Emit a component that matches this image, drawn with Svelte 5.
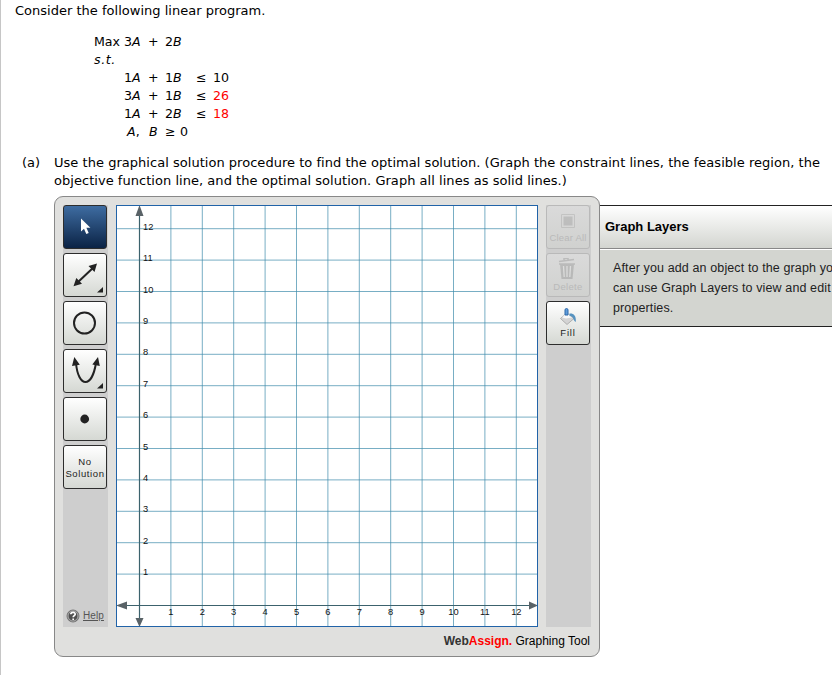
<script>
  const units = Array.from({ length: 12 }, (_, i) => i + 1);
  const step = 31.4;
  const rows = [
    ['1', 'A', '1', 'B', '10', false],
    ['3', 'A', '1', 'B', '26', true],
    ['1', 'A', '2', 'B', '18', true]
  ];
  const tools = ['pointer', 'line', 'circle', 'parabola', 'point', 'none'];
</script>

<main>
  <p class="intro"><span>Consider the following linear program.</span></p>

  <div class="program">
    <div class="row"><span>Max</span><span>3<i>A</i></span><span>+</span><span>2<i>B</i></span></div>
    <div class="row"><i class="st">s.t.</i></div>
    {#each rows as [a, x, b, y, limit, varied]}
      <div class="row">
        <span></span><span>{a}<i>{x}</i></span><span>+</span><span>{b}<i>{y}</i></span><span>≤</span><span class:varied>{limit}</span>
      </div>
    {/each}
    <div class="row signs"><span></span><span><i>A</i>,</span><i>B</i><span>≥</span><span>0</span></div>
  </div>

  <div class="question">
    <span class="label">(a)</span>
    <div>
      <div class="l1">Use the graphical solution procedure to find the optimal solution. (Graph the constraint lines, the feasible region, the</div>
      <div class="l2">objective function line, and the optimal solution. Graph all lines as solid lines.)</div>
    </div>
  </div>

  <div class="workspace">
    <section class="grapher">
      <div class="body">
        <div class="column">
          {#each tools as tool}
            <button class="tool" class:active={tool === 'pointer'} aria-label={tool}>
              {#if tool === 'none'}
                <span class="words">No<br />Solution</span>
              {:else}
                <svg width="42" height="42" viewBox="0 0 42 42">
                  {#if tool === 'pointer'}
                    <path d="M17 12.5v13l3-2.7 2.3 5.3 2.4-1.1-2.3-5.2h4z" fill="#fff" />
                  {:else if tool === 'line'}
                    <path d="M13 29 30 13" stroke="#222" stroke-width="2" />
                    <path d="M9.5 32.3 12.3 24 18 29.800z M33 9.500 30.500 18 24.500 12z" fill="#222" />
                  {:else if tool === 'circle'}
                    <circle cx="20.500" cy="21" r="10.500" fill="none" stroke="#222" stroke-width="2" />
                  {:else if tool === 'parabola'}
                    <path d="M12 13C13 25 17 32 21.500 32S30 25 32 13" fill="none" stroke="#222" stroke-width="2" />
                    <path d="M10.300 7 8 16 15.800 14.800z M34 7 28.300 14.500 35.800 16z" fill="#222" />
                  {:else}
                    <circle cx="20.700" cy="21" r="4.400" fill="#222" />
                  {/if}
                  {#if tool === 'line' || tool === 'parabola'}
                    <path d="M39 33v5.500h-6z" fill="#222" />
                  {/if}
                </svg>
              {/if}
            </button>
          {/each}
          <div class="help">
            <svg width="14" height="14" viewBox="0 0 14 14">
              <circle cx="7" cy="7" r="6" fill="#505050" stroke="#777" />
              <circle cx="7" cy="7" r="5" fill="none" stroke="#ddd" stroke-width=".7" />
              <path d="M4.800 5.300C5 2.700 9.300 2.800 9.200 5.200 9.200 6.700 7.200 6.600 7.200 8.300M7.200 9.500V11" fill="none" stroke="#fff" stroke-width="1.700" />
            </svg>
            <a href="#help">Help</a>
          </div>
        </div>

        <svg class="graph" width="422" height="422" viewBox="0 0 422 422">
          <rect x=".5" y=".5" width="421" height="421" fill="#fff" />
          {#each units as n}
            <path
              d="M{23.5 + n * step} 1V421M1 {400.5 - n * step}H421"
              stroke="#3f8cab"
              stroke-opacity=".7"
            />
          {/each}
          <path d="M23.500 5V417M5 400.500H417" stroke="#3c626d" stroke-width="1.200" />
          <path d="M23.500 0 19.500 11h8zM23.500 422l-4-9h8zM0 400.500l11-4v8zM422 400.500l-9-4v8z" fill="#596267" />
          {#each units as n}
            <text x={23.5 + n * step} y="409.500" text-anchor="middle">{n}</text>
            <text x="27" y={401.500 - n * step}>{n}</text>
          {/each}
          <rect x=".5" y=".5" width="421" height="421" fill="none" stroke="#2163a8" />
        </svg>

        <div class="column">
          <button class="tool action off">
            <svg width="16" height="16" viewBox="0 0 16 16">
              <path d="M1.500 1.500h13v13h-13z" fill="none" stroke="#888" />
              <path d="M3.500 3.500h9v9h-9z" fill="#777" />
            </svg>
            <span class="clear">Clear All</span>
          </button>
          <button class="tool action off trash">
            <svg width="18" height="22" viewBox="0 0 18 22">
              <path d="M1 3.500 16 1.500M6 2V.5h4V2M1 6h16" fill="none" stroke="#666" stroke-width="1.500" />
              <path d="M2 6h14l-1.500 15h-11z" fill="#666" />
              <path d="M5.500 8l.7 11M9 8v11M12.500 8l-.7 11" stroke="#eee" stroke-width="1.300" />
            </svg>
            <span>Delete</span>
          </button>
          <button class="tool action fill">
            <svg width="18" height="18" viewBox="0 0 18 18">
              <path d="M8 5 1.500 10.500 8 16.500l7-6z" fill="#d4d4d4" stroke="#999" stroke-width=".7" />
              <path d="M8 5 3 9.500l4 1 6-1z" fill="#f7f7f7" />
              <path d="M6 2q0-1.500 1.500-1.500T9 2v5H6z" fill="#5f9cda" stroke="#2c68aa" />
              <path d="M10.500 5.500C14 5 17.500 7 16.800 14 13.500 12 15 8 10.500 8z" fill="#5793c0" />
            </svg>
            <span>Fill</span>
          </button>
        </div>
      </div>
      <footer><span><b>Web<em>Assign.</em></b> Graphing Tool</span></footer>
    </section>

    <aside>
      <h2>Graph Layers</h2>
      <p>After you add an object to the graph you<br />can use Graph Layers to view and edit<br />properties.</p>
    </aside>
  </div>
</main>

<style>
  :global(body) { margin: 0; background: #fff; }
  main {
    box-sizing: border-box;
    width: 832px;
    height: 675px;
    overflow: hidden;
    border-left: 1px solid #c6c6c6;
    padding-top: 2px;
    font: 13px/18px Verdana, "DejaVu Sans", sans-serif;
    color: #000;
  }
  .intro { margin: 0 0 13px 14px; letter-spacing: .01px; }
  .program { margin-left: 93px; }
  .row { display: grid; grid-template-columns: 30px 24px 17px 31px 17px auto; height: 18px; white-space: nowrap; font-size: 12.6px; }
  .st { letter-spacing: .6px; }
  .signs { grid-template-columns: 33px 22px 16px 15px auto; }
  .varied { color: red; }
  .question { display: flex; margin: 13px 0 0 21px; white-space: nowrap; }
  .label { width: 32px; }
  .l1 { letter-spacing: .03px; }
  .l2 { letter-spacing: .036px; }
  .workspace { display: flex; margin: 6px 0 0 53px; }
  .grapher {
    box-sizing: border-box;
    width: 546px;
    height: 461px;
    flex: none;
    padding: 8px;
    border: 1px solid #888;
    border-radius: 9px;
    background: #e0e0de;
  }
  .body { display: flex; justify-content: space-between; height: 422px; width: 528px; }
  .column { display: flex; flex-direction: column; gap: 4px; width: 45px; background: #cecece; }
  .tool {
    box-sizing: border-box;
    width: 44px;
    height: 44px;
    flex: none;
    padding: 0;
    border: 1px solid #2d2d2d;
    border-radius: 3px;
    background: linear-gradient(#fff, #d5d8d3);
    color: #222;
    font: 9.5px/12px "Liberation Sans", Arial, sans-serif;
    white-space: nowrap;
  }
  .tool > svg { display: block; }
  .active { background: linear-gradient(#3e6ca1, #0b2345); }
  .words { display: block; padding-top: 1px; letter-spacing: .6px; }
  .action { display: flex; flex-direction: column; align-items: center; justify-content: flex-end; padding-bottom: 5px; letter-spacing: .8px; }
  .off { border-color: #b9b9b9; background: linear-gradient(#dadada, #d0d1cf); color: #b9b9b9; }
  .off svg { opacity: .25; }
  .action.off { padding-bottom: 4px; }
  .action.off svg { margin-bottom: 3px; }
  .action.trash { padding-bottom: 3px; letter-spacing: .3px; }
  .action.trash svg { margin-bottom: 1px; margin-right: 2px; }
  .fill svg { margin-bottom: 1px; }
  .clear { letter-spacing: .2px; }
  .help { display: flex; align-items: center; gap: 3px; margin: auto 0 3px 3px; height: 16px; font: 10px/14px "Liberation Sans", Arial, sans-serif; }
  .help a { color: #555; letter-spacing: .1px; }
  .graph { display: block; }
  .graph text { font: 9.3px "Liberation Sans", Arial, sans-serif; fill: #111; }
  footer { padding: 5px 1px 0 0; text-align: right; font: 12px/18px "Liberation Sans", Arial, sans-serif; }
  footer b { color: #333; }
  footer em { color: #f00; font-style: normal; }
  aside {
    box-sizing: border-box;
    width: 232px;
    flex: none;
    height: 122px;
    margin-top: 9px;
    border-top: 1px solid #222;
    border-bottom: 1px solid #222;
    background: #d3d5d0;
    font-family: "Liberation Sans", Arial, sans-serif;
    white-space: nowrap;
    overflow: hidden;
  }
  h2 { margin: 0; height: 42px; padding-left: 5px; border-bottom: 1px solid #888; background: linear-gradient(#fff, #d3d5d0); box-shadow: 0 1px #fff; font-size: 13px; line-height: 42px; }
  aside p { margin: 9px 0 0 13px; font-size: 12.5px; line-height: 20px; letter-spacing: .12px; color: #222; }
</style>
